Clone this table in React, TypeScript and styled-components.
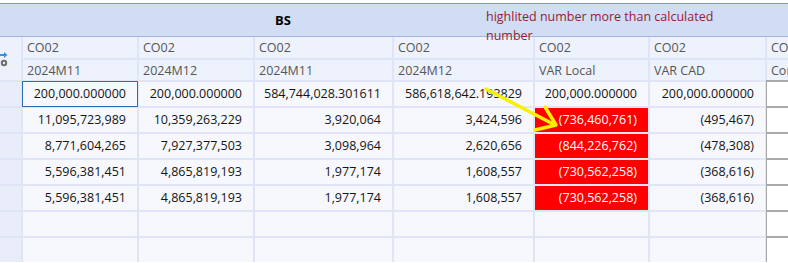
import React from 'react';
import styled, { createGlobalStyle } from 'styled-components';

const GlobalStyle = createGlobalStyle`
  body {
    margin: 0;
    background: #ffffff;
    font-family: 'Open Sans', 'Noto Sans', sans-serif;
  }
`;

const Page = styled.div`
  position: relative;
  width: 788px;
  height: 263px;
  overflow: hidden;
  box-sizing: border-box;
  padding-top: 3px;
  background: #ffffff;
`;

const GroupBand = styled.div`
  height: 32px;
  border-top: 1px solid #7d9bd0;
  border-bottom: 1px solid #a3b5df;
  background: #d0ddf5;
  display: flex;
  align-items: center;
  padding-left: 275px;
  font-size: 13px;
  font-weight: 700;
  color: #000000;
`;

const Grid = styled.div`
  display: grid;
  grid-template-columns: 21px 114px 114px 137px 139px 113px 115px 1fr;
  grid-template-rows: 21px 20px repeat(7, 24px);
  gap: 2px;
  background: #dfe4f6;
`;

const Corner = styled.div`
  grid-row: span 2;
  background: #edf1fc;
  display: flex;
  align-items: center;
`;

const HeadCell = styled.div`
  background: #eef2fd;
  color: #555555;
  font-size: 12.5px;
  padding-left: 4px;
  display: flex;
  align-items: center;
  white-space: nowrap;
  overflow: hidden;
`;

const RowHead = styled.div`
  background: #e9edfa;
`;

const Cell = styled.div<{ $alert?: boolean; $selected?: boolean }>`
  background: ${({ $alert }) => ($alert ? '#ff0000' : '#f7f8fe')};
  color: ${({ $alert }) => ($alert ? '#ffffff' : '#141414')};
  font-size: 12.5px;
  line-height: 24px;
  text-align: right;
  padding-right: 11px;
  white-space: nowrap;
  outline: ${({ $selected }) => ($selected ? '1px solid #2d6db5' : 'none')};
  position: relative;
`;

const InputCell = styled.div`
  background: #ffffff;
  margin-top: -2px;
  margin-left: -1px;
  border-top: 2px solid #a9a9a9;
  border-left: 1px solid #a9a9a9;
`;

const Note = styled.div`
  position: absolute;
  left: 486px;
  top: 8px;
  width: 240px;
  font-size: 12.5px;
  line-height: 18.5px;
  color: #991b30;
`;

const Pointer = styled.svg`
  position: absolute;
  left: 0;
  top: 0;
  pointer-events: none;
`;

const heads: [string, string][] = [
  ['CO02', '2024M11'],
  ['CO02', '2024M12'],
  ['CO02', '2024M11'],
  ['CO02', '2024M12'],
  ['CO02', 'VAR Local'],
  ['CO02', 'VAR CAD'],
  ['CO02', 'Corp'],
];

const rows: string[][] = [
  ['200,000.000000', '200,000.000000', '584,744,028.301611', '586,618,642.193829', '200,000.000000', '200,000.000000'],
  ['11,095,723,989', '10,359,263,229', '3,920,064', '3,424,596', '(736,460,761)', '(495,467)'],
  ['8,771,604,265', '7,927,377,503', '3,098,964', '2,620,656', '(844,226,762)', '(478,308)'],
  ['5,596,381,451', '4,865,819,193', '1,977,174', '1,608,557', '(730,562,258)', '(368,616)'],
  ['5,596,381,451', '4,865,819,193', '1,977,174', '1,608,557', '(730,562,258)', '(368,616)'],
  ['', '', '', '', '', ''],
  ['', '', '', '', '', ''],
];

function PivotIcon() {
  return (
    <svg width="10" height="16" viewBox="0 0 10 16">
      <path d="M0 4h5" stroke="#3f8fd8" strokeWidth="2" />
      <path d="M4 1l3.5 3L4 7z" fill="#3f8fd8" />
      <circle cx="4" cy="12" r="3.2" fill="#6e6e6e" />
      <circle cx="4" cy="12" r="1.2" fill="#edf1fc" />
    </svg>
  );
}

export default function App() {
  return (
    <Page>
      <GlobalStyle />
      <GroupBand>BS</GroupBand>
      <Grid>
        <Corner>
          <PivotIcon />
        </Corner>
        {heads.map(([a], i) => (
          <HeadCell key={`a${i}`}>{a}</HeadCell>
        ))}
        {heads.map(([, b], i) => (
          <HeadCell key={`b${i}`}>{b}</HeadCell>
        ))}
        {rows.map((row, r) => (
          <React.Fragment key={r}>
            <RowHead />
            {row.map((v, c) => (
              <Cell
                key={c}
                $selected={r === 0 && c === 0}
                $alert={c === 4 && r >= 1 && r <= 4}
              >
                {v}
              </Cell>
            ))}
            <InputCell />
          </React.Fragment>
        ))}
      </Grid>
      <Note>highlited number more than calculated number</Note>
      <Pointer width="788" height="263">
        <g stroke="#f8f000" strokeWidth="3.5" strokeLinecap="round" fill="none">
          <path d="M486 89L555 125" />
          <path d="M545 107L556 125L535 130" strokeLinejoin="round" />
        </g>
      </Pointer>
    </Page>
  );
}
